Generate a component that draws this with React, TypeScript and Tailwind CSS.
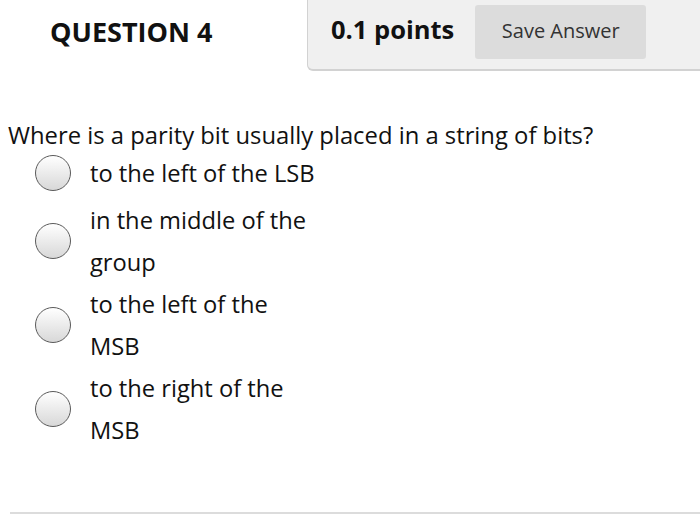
const options = [
  ["to the left of the LSB"],
  ["in the middle of the", "group"],
  ["to the left of the", "MSB"],
  ["to the right of the", "MSB"],
];

function Radio() {
  return (
    <div className="w-[36px] h-[36px] shrink-0 rounded-full border-[1.5px] border-[#5a5a5a] bg-gradient-to-b from-white to-[#d8d8d8]" />
  );
}

export default function App() {
  return (
    <div
      className="w-[700px] h-[516px] bg-white text-[#111] flex flex-col overflow-hidden"
      style={{ fontFamily: '"Open Sans", "Liberation Sans", sans-serif' }}
    >
      {/* header */}
      <div className="flex h-[71px] shrink-0">
        <div className="w-[307px] pl-[50px] pt-[12px] text-[27px] font-bold">QUESTION 4</div>
        <div className="flex-1 flex items-start bg-[#f0f0f0] border-l border-b-2 border-[#d2d2d2] rounded-bl-[6px]">
          <div className="ml-[23px] mt-[10px] text-[25.5px] font-bold">0.1 points</div>
          <button className="ml-[21px] mt-[5px] w-[171px] h-[54px] rounded-[3px] bg-[#dcdcdc] text-[20px] text-[#333] pb-[2px]">
            Save Answer
          </button>
        </div>
      </div>

      <p className="mt-[48px] pl-[8px] text-[23.8px] leading-[32px]">
        Where is a parity bit usually placed in a string of bits?
      </p>

      <div className="flex flex-col mt-[1px]">
        {options.map((lines, i) => (
          <div key={i} className={`flex items-center pl-[35px] ${i === 1 ? "mt-[5px]" : ""}`}>
            <Radio />
            <div className="ml-[19px] w-[228px] text-[23.7px] leading-[42px]">
              {lines.map((l) => (
                <div key={l}>{l}</div>
              ))}
            </div>
          </div>
        ))}
      </div>

      <div className="mt-auto mb-[2px] ml-[10px] h-[2px] bg-[#dcdcdc]" />
    </div>
  );
}
